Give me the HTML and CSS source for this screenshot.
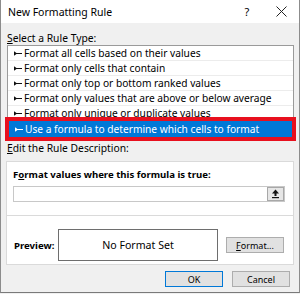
FILE: index.html
```html
<!DOCTYPE html>
<html>
<head>
<meta charset="utf-8">
<link rel="stylesheet" href="styles.css">
</head>
<body>
<div class="window">
  <div class="titlebar">
    <span class="title">New Formatting Rule</span>
    <span class="tb-btn help">?</span>
    <span class="tb-btn close">
      <svg width="11" height="11" viewBox="0 0 11 11"><path d="M0.5 0.5 L10.5 10.5 M10.5 0.5 L0.5 10.5" stroke="#222" stroke-width="1"/></svg>
    </span>
  </div>
  <div class="content">
    <div class="label"><u>S</u>elect a Rule Type:</div>
    <div class="list">
      <div class="row"><svg class="arr" width="8" height="5" viewBox="0 0 8 5"><path d="M0 0.3 L3.2 2.5 L0 4.7 Z M0 2 H8 V3 H0 Z" fill="#111"/></svg>Format all cells based on their values</div>
      <div class="row"><svg class="arr" width="8" height="5" viewBox="0 0 8 5"><path d="M0 0.3 L3.2 2.5 L0 4.7 Z M0 2 H8 V3 H0 Z" fill="#111"/></svg>Format only cells that contain</div>
      <div class="row"><svg class="arr" width="8" height="5" viewBox="0 0 8 5"><path d="M0 0.3 L3.2 2.5 L0 4.7 Z M0 2 H8 V3 H0 Z" fill="#111"/></svg>Format only top or bottom ranked values</div>
      <div class="row"><svg class="arr" width="8" height="5" viewBox="0 0 8 5"><path d="M0 0.3 L3.2 2.5 L0 4.7 Z M0 2 H8 V3 H0 Z" fill="#111"/></svg>Format only values that are above or below average</div>
      <div class="row"><svg class="arr" width="8" height="5" viewBox="0 0 8 5"><path d="M0 0.3 L3.2 2.5 L0 4.7 Z M0 2 H8 V3 H0 Z" fill="#111"/></svg>Format only unique or duplicate values</div>
      <div class="row selected"><svg class="arr" width="8" height="5" viewBox="0 0 8 5"><path d="M0 0.3 L3.2 2.5 L0 4.7 Z M0 2 H8 V3 H0 Z" fill="#fff"/></svg>Use a formula to determine which cells to format<div class="redbox"></div></div>
    </div>
    <div class="label label2"><u>E</u>dit the Rule Description:</div>
    <div class="panel">
      <div class="section">
        <div class="bold">F<u>o</u>rmat values where this formula is true:</div>
        <div class="input">
          <span class="pick">
            <svg width="9" height="10" viewBox="0 0 9 10"><path d="M4.5 0.5 L8 4.5 H5.5 V7 H3.5 V4.5 H1 Z" fill="#111"/><rect x="1" y="8" width="7" height="1.2" fill="#111"/></svg>
          </span>
        </div>
      </div>
      <div class="section preview-row">
        <div class="bold">Preview:</div>
        <div class="preview">No Format Set</div>
        <div class="btn fmt"><u>F</u>ormat...</div>
      </div>
    </div>
    <div class="buttons">
      <div class="btn ok">OK</div>
      <div class="btn">Cancel</div>
    </div>
  </div>
</div>
</body>
</html>
```

FILE: styles.css
```css
html, body {
  margin: 0;
  padding: 0;
  background: #f0f0f0;
}
body {
  font-family: "Noto Sans", "Open Sans", sans-serif;
  font-size: 10.2px;
  color: #000;
}
.window {
  width: 300px;
  height: 293px;
  box-sizing: border-box;
  border-left: 1px solid #8c8c8c;
  border-right: 1px solid #8c8c8c;
  border-bottom: 1px solid #7a7a7a;
  background: #f0f0f0;
}
.titlebar {
  height: 23px;
  background: #fff;
  display: flex;
  align-items: center;
  padding-left: 7px;
}
.title {
  font-size: 10.5px;
  flex: 1;
}
.tb-btn {
  display: flex;
  align-items: center;
  justify-content: center;
  width: 36px;
  height: 23px;
}
.help {
  font-size: 11px;
  margin-right: -2px;
}
.close {
  width: 36px;
}
.content {
  padding: 0 5px 0 6px;
}
.label {
  margin-top: 9px;
  line-height: 13px;
  height: 13px;
  font-size: 10.3px;
}
.label2 {
  margin-top: 2px;
}
.list {
  background: #fff;
  border: 1px solid #9a9a9a;
  padding-bottom: 2px;
}
.row {
  height: 15px;
  box-sizing: border-box;
  border-bottom: 1px solid #ececec;
  display: flex;
  align-items: center;
  padding-left: 6px;
  white-space: nowrap;
  position: relative;
}
.arr {
  margin-right: 2px;
  flex: none;
}
.row.selected {
  height: 16px;
  background: #0078d7;
  color: #fff;
  border-bottom: none;
  padding-left: 7px;
}
.redbox {
  position: absolute;
  left: -3px;
  right: -3px;
  top: -4px;
  bottom: -4px;
  border: 4px solid #e8101e;
}
.panel {
  margin-top: 6px;
  margin-left: -1px;
  background: #fff;
  border: 1px solid #dadada;
}
.section {
  padding: 6px 8px 13px 6px;
}
.bold {
  font-weight: bold;
  line-height: 13px;
  font-size: 9.6px;
}
.input {
  margin-top: 5px;
  height: 16px;
  box-sizing: border-box;
  border: 1px solid #c8c8c8;
  display: flex;
  justify-content: flex-end;
}
.pick {
  width: 17px;
  height: 14px;
  box-sizing: border-box;
  background: #e6e6e6;
  border: 1px solid #a8a8a8;
  display: flex;
  align-items: center;
  justify-content: center;
}
.preview-row {
  border-top: 1px solid #dadada;
  display: flex;
  align-items: center;
  padding: 13px 9px 3px 7px;
}
.preview-row .bold {
  width: 44px;
}
.preview {
  width: 160px;
  height: 32px;
  box-sizing: border-box;
  border: 1px solid #6e6e6e;
  display: flex;
  align-items: center;
  justify-content: center;
  font-size: 10.6px;
}
.btn {
  height: 16px;
  box-sizing: border-box;
  width: 58px;
  background: #e1e1e1;
  border: 1px solid #adadad;
  display: flex;
  align-items: center;
  justify-content: center;
  font-size: 9px;
}
.fmt {
  margin-left: auto;
}
.buttons {
  display: flex;
  justify-content: flex-end;
  gap: 9px;
  margin-top: 6px;
  padding-right: 4px;
}
.btn.ok {
  border: 1px solid #0078d7;
}
```
